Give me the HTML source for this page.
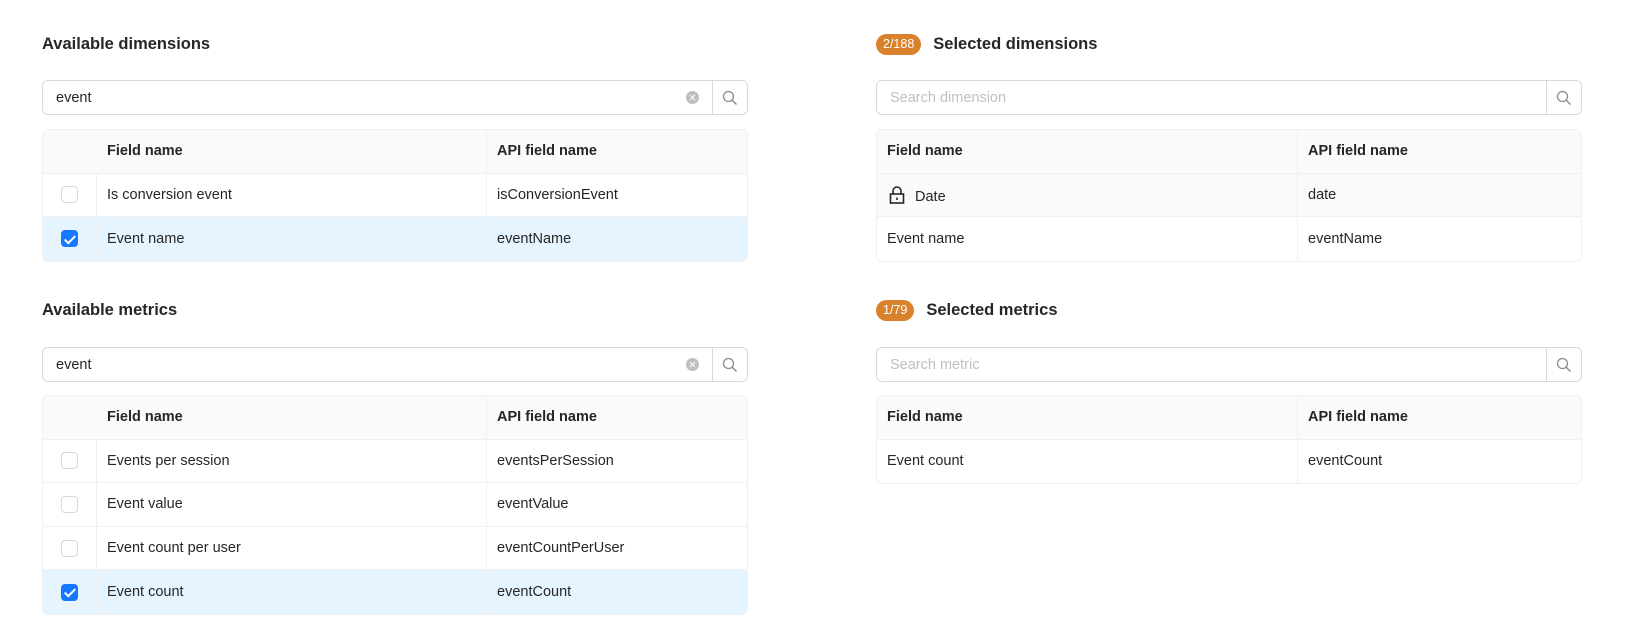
<!DOCTYPE html>
<html><head><meta charset="utf-8">
<style>
*{box-sizing:border-box;margin:0;padding:0}
body{width:1630px;height:630px;background:#fff;font-family:"Segoe UI","Liberation Sans",sans-serif;color:#262626;font-size:14px;position:relative;overflow:hidden}
.h{position:absolute;font-size:16.5px;font-weight:600;color:#262626;display:flex;align-items:center;height:22px}
.badge{background:#d9822b;color:#fff;font-size:12.5px;font-weight:400;border-radius:11px;height:21px;padding:0 7px;display:flex;align-items:center;margin-right:12px}
.inp{position:absolute;height:35px;border:1px solid #d9d9d9;border-radius:6px;display:flex;align-items:center}
.inp .t{flex:1;padding-left:13px;font-size:14.5px}
.inp .ph{color:#bfbfbf}
.inp .clr{width:13px;height:13px;border-radius:50%;background:#bfbfbf;margin-right:13px;position:relative}
.inp .clr:before,.inp .clr:after{content:"";position:absolute;left:6px;top:3px;width:1.4px;height:7px;background:#fff;transform:rotate(45deg)}
.inp .clr:after{transform:rotate(-45deg)}
.inp .btn{width:35px;height:33px;border-left:1px solid #d9d9d9;display:flex;align-items:center;justify-content:center}
table{position:absolute;border-collapse:separate;border-spacing:0;border:1px solid #f0f0f0;border-radius:6px;overflow:hidden;table-layout:fixed}
td,th{height:43.6px;border-bottom:1px solid #f0f0f0;text-align:left;padding:0 10px;font-size:14.5px;font-weight:400;vertical-align:middle}
th{background:#fafafa;font-weight:600}
tr:last-child td{border-bottom:none}
td.c{border-right:1px solid #f0f0f0;padding:0;text-align:center}
td.f,th.f{border-right:1px solid #f0f0f0}
tr.sel td{background:#e6f4ff;border-bottom-color:#e6f4ff}
.cb{display:inline-block;width:17px;height:17px;border:1px solid #d9d9d9;border-radius:4px;vertical-align:middle;background:#fff}
.cb.on{background:#1677ff;border-color:#1677ff;position:relative}
.cb.on:after{content:"";position:absolute;left:5px;top:1.5px;width:4px;height:9px;border:solid #fff;border-width:0 2px 2px 0;transform:rotate(45deg)}
</style></head><body>

<div class="h" style="left:42px;top:33px">Available dimensions</div>
<div class="inp" style="left:42px;top:80px;width:706px"><div class="t">event</div><div class="clr"></div><div class="btn"><svg width="16" height="16" viewBox="0 0 16 16"><circle cx="6.5" cy="6.5" r="5" fill="none" stroke="#8c8c8c" stroke-width="1.3"/><path d="M10.2 10.2L14.5 14.5" stroke="#8c8c8c" stroke-width="1.4"/></svg></div></div>
<table style="left:42px;top:129px;width:706px">
<colgroup><col style="width:54px"><col style="width:390px"><col></colgroup>
<tr><th></th><th class="f">Field name</th><th>API field name</th></tr>
<tr><td class="c"><span class="cb"></span></td><td class="f">Is conversion event</td><td>isConversionEvent</td></tr>
<tr class="sel"><td class="c"><span class="cb on"></span></td><td class="f">Event name</td><td>eventName</td></tr>
</table>

<div class="h" style="left:42px;top:299px">Available metrics</div>
<div class="inp" style="left:42px;top:347px;width:706px"><div class="t">event</div><div class="clr"></div><div class="btn"><svg width="16" height="16" viewBox="0 0 16 16"><circle cx="6.5" cy="6.5" r="5" fill="none" stroke="#8c8c8c" stroke-width="1.3"/><path d="M10.2 10.2L14.5 14.5" stroke="#8c8c8c" stroke-width="1.4"/></svg></div></div>
<table style="left:42px;top:395px;width:706px">
<colgroup><col style="width:54px"><col style="width:390px"><col></colgroup>
<tr><th></th><th class="f">Field name</th><th>API field name</th></tr>
<tr><td class="c"><span class="cb"></span></td><td class="f">Events per session</td><td>eventsPerSession</td></tr>
<tr><td class="c"><span class="cb"></span></td><td class="f">Event value</td><td>eventValue</td></tr>
<tr><td class="c"><span class="cb"></span></td><td class="f">Event count per user</td><td>eventCountPerUser</td></tr>
<tr class="sel"><td class="c"><span class="cb on"></span></td><td class="f">Event count</td><td>eventCount</td></tr>
</table>

<div class="h" style="left:876px;top:33px"><span class="badge">2/188</span>Selected dimensions</div>
<div class="inp" style="left:876px;top:80px;width:706px"><div class="t ph">Search dimension</div><div class="btn"><svg width="16" height="16" viewBox="0 0 16 16"><circle cx="6.5" cy="6.5" r="5" fill="none" stroke="#8c8c8c" stroke-width="1.3"/><path d="M10.2 10.2L14.5 14.5" stroke="#8c8c8c" stroke-width="1.4"/></svg></div></div>
<table style="left:876px;top:129px;width:706px">
<colgroup><col style="width:421px"><col></colgroup>
<tr><th class="f">Field name</th><th>API field name</th></tr>
<tr><td class="f" style="background:#fafafa"><svg width="20" height="20" viewBox="0 0 20 20" style="vertical-align:-4px;margin-right:8px"><path d="M6 9V6a4 4 0 0 1 8 0v3" fill="none" stroke="#262626" stroke-width="1.6"/><rect x="3.5" y="9" width="13" height="9" fill="none" stroke="#262626" stroke-width="1.6"/><rect x="9.2" y="12.5" width="1.6" height="2.5" fill="#262626"/></svg>Date</td><td style="background:#fafafa">date</td></tr>
<tr><td class="f">Event name</td><td>eventName</td></tr>
</table>

<div class="h" style="left:876px;top:299px"><span class="badge">1/79</span>Selected metrics</div>
<div class="inp" style="left:876px;top:347px;width:706px"><div class="t ph">Search metric</div><div class="btn"><svg width="16" height="16" viewBox="0 0 16 16"><circle cx="6.5" cy="6.5" r="5" fill="none" stroke="#8c8c8c" stroke-width="1.3"/><path d="M10.2 10.2L14.5 14.5" stroke="#8c8c8c" stroke-width="1.4"/></svg></div></div>
<table style="left:876px;top:395px;width:706px">
<colgroup><col style="width:421px"><col></colgroup>
<tr><th class="f">Field name</th><th>API field name</th></tr>
<tr><td class="f">Event count</td><td>eventCount</td></tr>
</table>

</body></html>
